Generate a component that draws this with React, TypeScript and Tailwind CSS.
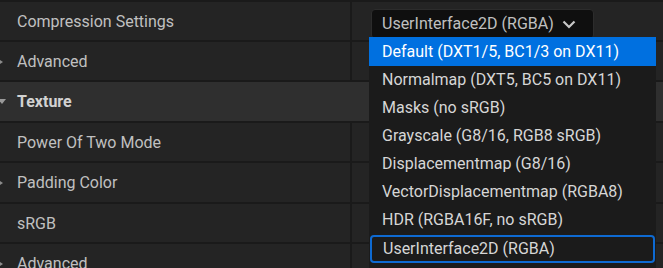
type Row = { label: string; h: string; arrow?: 'right' | 'down'; header?: boolean; combo?: boolean };

const rows: Row[] = [
  { label: 'Compression Settings', h: 'h-[40px]', combo: true },
  { label: 'Advanced', h: 'h-[40px]', arrow: 'right' },
  { label: 'Texture', h: 'h-[41px]', arrow: 'down', header: true },
  { label: 'Power Of Two Mode', h: 'h-[40px]' },
  { label: 'Padding Color', h: 'h-[41px]', arrow: 'right' },
  { label: 'sRGB', h: 'h-[40px]' },
  { label: 'Advanced', h: 'h-[40px]', arrow: 'right' },
];

const options = [
  'Default (DXT1/5, BC1/3 on DX11)',
  'Normalmap (DXT5, BC5 on DX11)',
  'Masks (no sRGB)',
  'Grayscale (G8/16, RGB8 sRGB)',
  'Displacementmap (G8/16)',
  'VectorDisplacementmap (RGBA8)',
  'HDR (RGBA16F, no sRGB)',
  'UserInterface2D (RGBA)',
];

function Arrow({ dir }: { dir?: 'right' | 'down' }) {
  return (
    <svg width="17" height="10" viewBox="0 0 17 10" className="shrink-0">
      {dir === 'right' && <polygon points="-3,1 3,5 -3,9" fill="#8c8c8c" />}
      {dir === 'down' && <polygon points="-2,2 6,2 2,7" fill="#9a9a9a" />}
    </svg>
  );
}

export default function App() {
  return (
    <div className="relative w-[663px] h-[268px] overflow-hidden bg-[#242424] font-['Roboto',sans-serif] text-[16px] leading-[20px]">
      <div className="h-[2px] bg-[#1a1a1a]" />
      {rows.map((r, i) => (
        <div
          key={i}
          className={`flex items-stretch border-b-2 border-[#1a1a1a] ${r.h} ${r.header ? 'bg-[#2f2f2f]' : 'bg-[#242424]'}`}
        >
          {r.header ? (
            <div className="flex items-center pt-[1px]">
              <Arrow dir={r.arrow} />
              <span className="font-bold text-[#d2d2d2]">{r.label}</span>
            </div>
          ) : (
            <>
              <div className="flex items-center w-[350px] shrink-0 pt-[1px]">
                <Arrow dir={r.arrow} />
                <span className="text-[#c0c0c0]">{r.label}</span>
              </div>
              <div className="w-[2px] bg-[#1a1a1a]" />
              <div className="flex-1 flex items-center pl-[19px]">
                {r.combo && (
                  <div className="flex items-center h-[30px] w-[223px] mt-[5px] rounded-[4px] bg-[#0f0f0f] border border-[#2c2c2c] pl-[10px] text-[#c0c0c0]">
                    <span>UserInterface2D (RGBA)</span>
                    <svg width="14" height="9" viewBox="0 0 14 9" className="ml-[8px] mt-[1px]">
                      <polyline points="1.5,1.5 7,7 12.5,1.5" fill="none" stroke="#c8c8c8" strokeWidth="2.2" />
                    </svg>
                  </div>
                )}
              </div>
            </>
          )}
        </div>
      ))}

      <div className="absolute left-[369px] top-[37px] w-[287px] h-[240px] bg-[#1b1b1b] text-[#d6d6d6]">
        {options.map((o, i) => {
          const first = i === 0;
          const last = i === options.length - 1;
          return (
            <div
              key={o}
              className={`flex items-center ${first ? 'h-[29px] bg-[#0070e0] text-white' : 'h-[28px]'} ${
                last ? 'mx-px mt-px h-[26px] rounded-[4px] border-2 border-[#0e6ad2] pl-[11px]' : 'pl-[13px]'
              }`}
            >
              {o}
            </div>
          );
        })}
      </div>
    </div>
  );
}
